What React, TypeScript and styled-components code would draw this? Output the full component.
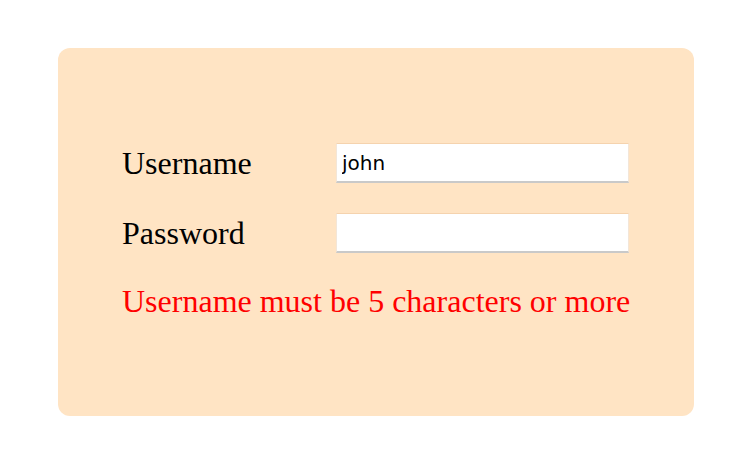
import { createGlobalStyle, styled } from "styled-components";

const GlobalStyle = createGlobalStyle`
  body {
    margin: 0;
    background: #ffffff;
    font-family: "Liberation Serif", "Times New Roman", serif;
  }
`;

const Page = styled.div`
  padding: 48px 0 0 58px;
`;

const Card = styled.form`
  box-sizing: border-box;
  width: 636px;
  height: 368px;
  padding: 95px 64px 0 64px;
  background-color: #ffe4c4;
  border-radius: 12px;
`;

const Fields = styled.div`
  display: grid;
  grid-template-columns: 214px 293px;
  row-gap: 30px;
  align-items: center;
`;

const Label = styled.label`
  font-size: 32px;
  color: #000000;
`;

const Input = styled.input`
  box-sizing: border-box;
  width: 293px;
  height: 40px;
  margin: 0;
  padding: 0 5px;
  border-style: solid;
  border-width: 1px 1px 2px 1px;
  border-color: #f5d3ae #f3e6d8 #c9c9c9 #f3e6d8;
  background: #ffffff;
  font-family: "DejaVu Sans", "Lucida Grande", sans-serif;
  font-size: 20px;
  color: #000000;
  outline: none;
`;

const Error = styled.div`
  margin-top: 30px;
  font-size: 32px;
  color: #ff0000;
  white-space: nowrap;
`;

export default function App() {
  return (
    <>
      <GlobalStyle />
      <Page>
        <Card onSubmit={(e) => e.preventDefault()}>
          <Fields>
            <Label htmlFor="username">Username</Label>
            <Input id="username" type="text" defaultValue="john" />
            <Label htmlFor="password">Password</Label>
            <Input id="password" type="password" />
          </Fields>
          <Error>Username must be 5 characters or more</Error>
        </Card>
      </Page>
    </>
  );
}
